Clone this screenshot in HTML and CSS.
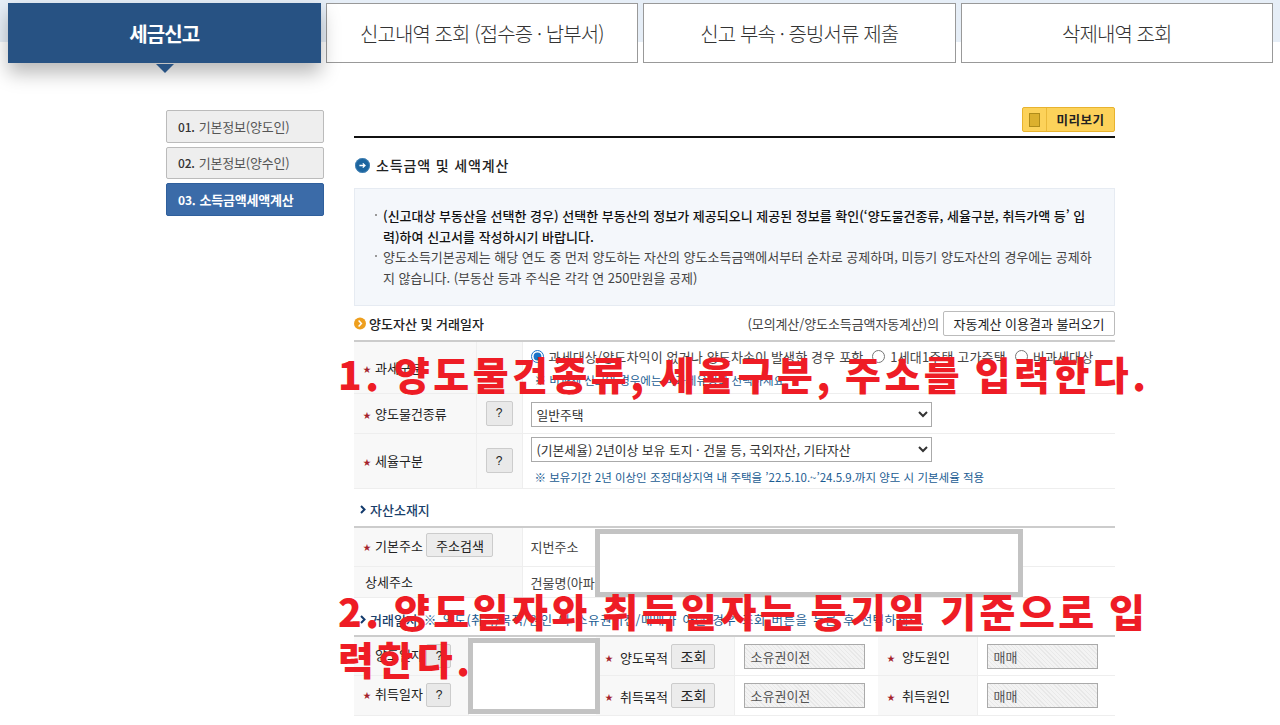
FILE: index.html
```html
<!DOCTYPE html>
<html lang="ko">
<head>
<meta charset="utf-8">
<title>세금신고</title>
<link rel="stylesheet" href="styles.css">
</head>
<body>
<div class="page">
  <nav class="tabs">
    <a class="tab active">세금신고</a>
    <a class="tab">신고내역 조회 (접수증 · 납부서)</a>
    <a class="tab">신고 부속 · 증빙서류 제출</a>
    <a class="tab">삭제내역 조회</a>
  </nav>
  <div class="content">
    <aside class="steps">
      <a class="step"><b>01.</b> 기본정보(양도인)</a>
      <a class="step"><b>02.</b> 기본정보(양수인)</a>
      <a class="step current"><b>03.</b> 소득금액세액계산</a>
    </aside>
    <main class="main">
      <div class="toolbar">
        <button class="preview"><span class="preview-icon"><i></i></span><span class="preview-label">미리보기</span></button>
      </div>
      <h2 class="title">
        <svg class="ico" width="15" height="15" viewBox="0 0 15 15"><circle cx="7.5" cy="7.5" r="7.5" fill="#1c659f"/><circle cx="7.5" cy="7.5" r="7" fill="none" stroke="#5f97c4" stroke-width=".6"/><path d="M4.4 7.5h5.4M7.8 5.4l2.2 2.1-2.2 2.1" fill="none" stroke="#fff" stroke-width="1.3"/></svg>
        소득금액 및 세액계산
      </h2>
      <div class="info">
        <p class="strong">(신고대상 부동산을 선택한 경우) 선택한 부동산의 정보가 제공되오니 제공된 정보를 확인(‘양도물건종류, 세율구분, 취득가액 등’ 입력)하여 신고서를 작성하시기 바랍니다.</p>
        <p>양도소득기본공제는 해당 연도 중 먼저 양도하는 자산의 양도소득금액에서부터 순차로 공제하며, 미등기 양도자산의 경우에는 공제하지 않습니다. (부동산 등과 주식은 각각 연 250만원을 공제)</p>
      </div>
      <div class="sec-head">
        <h3 class="sec-title">
          <svg width="12" height="13" viewBox="0 0 12 13"><circle cx="6" cy="6.5" r="6" fill="#ee9f1e"/><path d="M4.6 3.6 7.4 6.5 4.6 9.4" fill="none" stroke="#fff" stroke-width="1.5"/></svg>
          양도자산 및 거래일자
        </h3>
        <div class="auto">(모의계산/양도소득금액자동계산)의 <button class="btn-auto">자동계산 이용결과 불러오기</button></div>
      </div>
      <table class="grid">
        <colgroup><col class="c1"><col class="c2"><col></colgroup>
        <tr class="r52">
          <th><span class="req">★</span>과세구분</th><th></th>
          <td>
            <div class="radios">
              <label><input type="radio" name="t" checked> 과세대상/양도차익이 없거나 양도차손이 발생한 경우 포함</label>
              <label><input type="radio" name="t"> 1세대1주택 고가주택</label>
              <label><input type="radio" name="t"> 비과세대상</label>
            </div>
            <p class="note">※ 비과세 신고의 경우에는 비과세유형을 선택하세요.</p>
          </td>
        </tr>
        <tr class="r40">
          <th><span class="req">★</span>양도물건종류</th><th><button class="q">?</button></th>
          <td class="pad2"><select class="sel"><option>일반주택</option></select></td>
        </tr>
        <tr class="r55">
          <th><span class="req">★</span>세율구분</th><th><button class="q">?</button></th>
          <td class="top">
            <select class="sel"><option>(기본세율) 2년이상 보유 토지 · 건물 등, 국외자산, 기타자산</option></select>
            <p class="note n2">※ 보유기간 2년 이상인 조정대상지역 내 주택을 ’22.5.10.~’24.5.9.까지 양도 시 기본세율 적용</p>
          </td>
        </tr>
      </table>
      <h4 class="sub"><svg class="chev" width="6" height="9" viewBox="0 0 6 9"><path d="M1 1l3.5 3.5L1 8" fill="none" stroke="#123a6c" stroke-width="2"/></svg>자산소재지</h4>
      <table class="grid">
        <colgroup><col class="c12"><col></colgroup>
        <tr class="r40">
          <th class="lift"><span class="req">★</span>기본주소 <button class="btn-s">주소검색</button></th>
          <td>지번주소</td>
        </tr>
        <tr class="r31">
          <th class="plain">상세주소</th>
          <td>건물명(아파트)</td>
        </tr>
      </table>
      <h4 class="sub"><svg class="chev" width="6" height="9" viewBox="0 0 6 9"><path d="M1 1l3.5 3.5L1 8" fill="none" stroke="#123a6c" stroke-width="2"/></svg>거래일자 <span class="sub-note">※ 양도(취득)목적/원인 이 소유권이전/매매가 아닌 경우 조회 버튼을 누른 후 선택하세요.</span></h4>
      <table class="grid deal">
        <colgroup><col class="d1"><col class="d2"><col class="d3"><col class="d4"><col class="d5"><col></colgroup>
        <tr class="r39">
          <th><span class="req">★</span>양도일자 <button class="q qs">?</button></th>
          <td></td>
          <th><span class="req">★</span>양도목적 <button class="btn-x">조회</button></th>
          <td><span class="ro w120">소유권이전</span></td>
          <th><span class="req">★</span>양도원인</th>
          <td><span class="ro w110">매매</span></td>
        </tr>
        <tr class="r39">
          <th><span class="req">★</span>취득일자 <button class="q qs">?</button></th>
          <td></td>
          <th><span class="req">★</span>취득목적 <button class="btn-x">조회</button></th>
          <td><span class="ro w120">소유권이전</span></td>
          <th><span class="req">★</span>취득원인</th>
          <td><span class="ro w110">매매</span></td>
        </tr>
      </table>
    </main>
  </div>
  <div class="mask mask-addr"></div>
  <div class="mask mask-date"></div>
  <p class="call call-1">1. 양도물건종류, 세율구분, 주소를 입력한다.</p>
  <p class="call call-2">2. 양도일자와 취득일자는 등기일 기준으로 입력한다.</p>
</div>
</body>
</html>
```
FILE: styles.css
```css
* { box-sizing: border-box; }
html, body { margin: 0; padding: 0; }
body { font-family: "Noto Sans CJK KR", "Noto Sans", sans-serif; color: #222; font-size: 13px; }
.page { position: relative; width: 1280px; height: 725px; overflow: hidden;
  background:
    linear-gradient(115deg, transparent 1218px, #f5f9fd 1218px, #f5f9fd 1262px, transparent 1262px) 0 0 / 100% 42px no-repeat,
    linear-gradient(#e6eef7 0, #e6eef7 42px, #fff 42px); }
.tabs { display: flex; gap: 5px; padding: 3px 7px 0 8px; height: 63px; }
.tab { flex: 1; display: flex; align-items: center; justify-content: center; background: #fff;
  border: 1px solid #999; font-size: 20px; font-weight: 300; letter-spacing: -.9px; color: #333; }
.tab.active { position: relative; background: #275283; border-color: #275283; color: #fff; font-weight: 700;
  box-shadow: 0 10px 18px rgba(0,0,0,.28); }
.tab.active::after { content: ""; position: absolute; left: 147px; top: 60px; border: 9px solid transparent;
  border-top-color: #275283; border-bottom: 0; }
.content { display: flex; margin: 44px 0 0 166px; gap: 30px; }
.steps { width: 158px; margin-top: 3px; display: flex; flex-direction: column; gap: 4px; }
.step { height: 32.5px; display: flex; align-items: center; gap: 4px; padding-left: 11px; background: #eee;
  border: 1px solid #bbb; border-radius: 2px; color: #555; font-size: 13px; letter-spacing: -.2px; }
.step b { color: #333; font-weight: 500; font-size: 12px; }
.step.current { background: #3b6ba8; border-color: #2f5f9c; color: #fff; font-weight: 700; }
.step.current b { color: #fff; font-weight: 700; }
.main { width: 761px; }
.toolbar { display: flex; justify-content: flex-end; height: 31px; border-bottom: 2px solid #111; padding-bottom: 5px; }
.preview { display: flex; align-items: stretch; width: 93px; height: 25px; padding: 0; background: #fcd25a;
  border: 1px solid #e8b32e; border-radius: 2px; font: 700 12.5px "Noto Sans CJK KR", sans-serif; letter-spacing: .5px; color: #222; }
.preview-icon { width: 24px; display: flex; align-items: center; justify-content: center; border-right: 1px solid #eab93a; }
.preview-icon i { display: block; width: 11px; height: 14px; background: #dcb02e; border: 1px solid #b08c1a; }
.preview-label { flex: 1; display: flex; align-items: center; justify-content: center; }
.title { margin: 0; height: 50px; display: flex; align-items: center; gap: 6px; font-size: 14px; letter-spacing: .85px; font-weight: 500; color: #222; padding-top: 4px; }
.ico { margin-left: 1px; }
.info { height: 118px; padding: 17px 21px 0 28px; background: #f4f7fb; border: 1px solid #e6ebf2; }
.info p { margin: 0; line-height: 20.7px; position: relative; font-size: 13px; color: #444; word-break: break-all; }
.info p::before { content: ""; position: absolute; left: -8px; top: 8px; width: 2px; height: 2px; background: #999; }
.info .strong { color: #111; font-weight: 500; }
.sec-head { height: 34px; display: flex; justify-content: space-between; align-items: center; }
.sec-title { margin: 0; display: flex; align-items: center; gap: 3px; font-size: 13px; font-weight: 500; color: #222; }
.auto { display: flex; align-items: center; gap: 4px; font-size: 13px; letter-spacing: -.1px; color: #444; }
.btn-auto { width: 172px; height: 25px; padding: 0; background: #fff; border: 1px solid #bbb; border-radius: 2px; font: 13px "Noto Sans CJK KR", sans-serif; color: #222; }
.grid { width: 100%; border-collapse: collapse; table-layout: fixed; border-top: 2px solid #ccc; border-bottom: 1px solid #bbb; }
.c1 { width: 122px; } .c2 { width: 46px; } .c12 { width: 168px; }
.d1 { width: 114px; } .d2 { width: 128px; } .d3 { width: 138px; } .d4 { width: 144px; } .d5 { width: 99px; }
.grid th { background: #f8f8f8; font-weight: 400; text-align: left; padding: 0 0 0 9px; border-bottom: 1px solid #eee; border-right: 1px solid #eee; color: #222; white-space: nowrap; }
.grid th + th { padding: 0; text-align: center; }
.grid td { padding: 0 0 0 8px; border-bottom: 1px solid #eee; color: #444; }
.grid.deal td { padding-left: 9px; }
.grid .top { vertical-align: top; padding-top: 3px; }
.grid .pad2 { padding-top: 2px; }
.grid .lift { padding-bottom: 3px; }
.r52 { height: 52px; } .r40 { height: 40px; } .r39 { height: 39.5px; } .r55 { height: 55px; } .r31 { height: 31px; }
.req { display: inline-block; width: 12px; color: #a5222a; font-size: 8px; vertical-align: 1px; }
.deal td + th .req { width: 15px; }
.plain { padding: 0 0 2px 11px !important; }
.radios { display: flex; gap: 9px; font-size: 13px; letter-spacing: .15px; }
.radios label { display: flex; align-items: center; gap: 5px; white-space: nowrap; }
.radios input { margin: 0; width: 13px; height: 13px; accent-color: #1a73c8; }
.note { margin: 6px 0 0 4px; font-size: 11.5px; color: #1b5c92; }
.n2 { margin-top: 7px; }
.sel { display: block; width: 401px; height: 25px; background: #fff; border: 1px solid #aaa; font: 12.8px "Noto Sans CJK KR", sans-serif; color: #333; padding-left: 1px; }
.q { width: 27px; height: 25px; padding: 0; background: #e9e9e9; border: 1px solid #ccc; border-radius: 2px; font: 500 12px "Liberation Sans", sans-serif; color: #222; }
.qs { width: 25px; height: 24px; }
.sub { margin: 0; height: 37px; padding: 5px 0 0 6px; display: flex; align-items: center; gap: 4px; font-size: 13px; font-weight: 500; color: #1a3f6b; }
.sub-note { font-weight: 400; font-size: 12.5px; letter-spacing: .4px; word-spacing: 2px; color: #1b5c92; margin-left: 2px; }
.btn-s { width: 67px; height: 24px; padding: 0; background: #ececec; border: 1px solid #ccc; border-radius: 2px; font: 13px "Noto Sans CJK KR", sans-serif; color: #222; }
.btn-x { width: 44px; height: 25px; padding: 0; background: #ececec; border: 1px solid #ccc; border-radius: 2px; font: 14px "Noto Sans CJK KR", sans-serif; color: #222; }
.ro { display: block; height: 25px; line-height: 23px; padding-left: 6px; border: 1px solid #aaa; color: #555;
  background: repeating-linear-gradient(45deg, #f3f3f3 0 2px, #e8e8e8 2px 3px); }
.w120 { width: 121px; } .w110 { width: 111px; }
.mask { position: absolute; background: #fff; border: 5px solid #c3c3c3; }
.mask-addr { left: 595px; top: 529px; width: 428px; height: 68px; }
.mask-date { left: 468px; top: 638px; width: 132px; height: 76px; }
.call { position: absolute; left: 338px; margin: 0; color: #ee1c25; font-size: 39px; font-weight: 900; line-height: 48px; letter-spacing: 3.5px; word-spacing: -3px; word-break: break-all; }
.call-1 { top: 349px; white-space: nowrap; }
.call-2 { top: 586px; width: 830px; }
```
